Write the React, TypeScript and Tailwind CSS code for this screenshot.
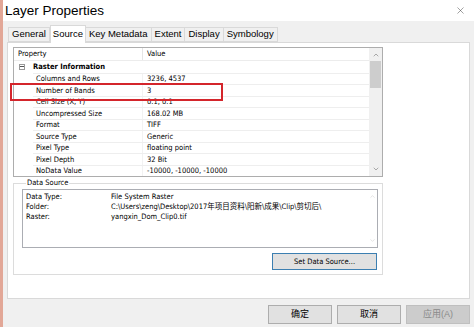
import { X, ChevronUp, ChevronDown } from "lucide-react";

const rows = [
    ["Columns and Rows", "3236, 4537"],
    ["Number of Bands", "3"],
    ["Cell Size (X, Y)", "0.1, 0.1"],
    ["Uncompressed Size", "168.02 MB"],
    ["Format", "TIFF"],
    ["Source Type", "Generic"],
    ["Pixel Type", "floating point"],
    ["Pixel Depth", "32 Bit"],
    ["NoData Value", "-10000, -10000, -10000"],
]

const tabs = ["General", "Source", "Key Metadata", "Extent", "Display", "Symbology"]

const small = "font-['DejaVu_Sans_Condensed','Liberation_Sans',sans-serif] text-[7.5px]"
const cjk = "font-['Liberation_Sans','Noto_Sans_CJK_SC',sans-serif]"

function Tab(props: { label: string; active: boolean }) {
    if (props.active) {
        return (
            <div className="relative z-10 -mb-px flex h-[18px] items-center border border-b-0 border-[#d9d9d9] bg-white px-[2px]">
                {props.label}
            </div>
        )
    }
    return (
        <div className="flex h-[15px] items-center border border-l-0 border-[#d9d9d9] bg-[#f0f0f0] px-[3px] first:border-l">
            {props.label}
        </div>
    )
}

function PropertyGrid() {
    return (
        <div className="relative ml-[5px] mt-[4px] flex h-[130px] w-[370px] border border-[#adadad] bg-white">
            <div className={`flex flex-1 flex-col ${small}`}>
                <div className="flex h-[13px] items-center border-b border-[#ececec]">
                    <div className="flex h-full w-[129px] items-center border-r border-[#e5e5e5] pl-[4px]">Property</div>
                    <div className="pl-[4px]">Value</div>
                </div>
                <div className="flex h-[11.5px] items-center">
                    <div className="ml-[5px] flex h-[6px] w-[6px] items-center justify-center border border-[#999]">
                        <div className="h-px w-[4px] bg-[#555]" />
                    </div>
                    <div className="ml-[8px] font-bold">Raster Information</div>
                </div>
                {rows.map(([k, v]) => (
                    <div key={k} className="flex h-[11.5px] pl-[19px]">
                        <div className="flex flex-1 items-center border-t border-[#eeeeee]">
                            <div className="flex h-full w-[110px] items-center border-r border-[#f2f2f2] pl-[3px]">{k}</div>
                            <div className="pl-[4px]">{v}</div>
                        </div>
                    </div>
                ))}
            </div>
            <div className="flex w-[13px] flex-col items-center bg-[#f0f0f0]">
                <ChevronUp size={8} strokeWidth={1.5} className="mt-[3px] text-[#606060]" />
                <div className="mt-[2px] h-[27px] w-[11px] bg-[#cdcdcd]" />
                <div className="flex-1" />
                <ChevronDown size={8} strokeWidth={1.5} className="mb-[3px] text-[#606060]" />
            </div>
            {/* rotes Kästchen um die Bandanzahl */}
            <div className="absolute left-[-4px] top-[35px] h-[18px] w-[213px] border-2 border-[#d4252b]" />
        </div>
    )
}

function DataSource() {
    return (
        <fieldset className={`ml-[5px] mt-[1px] w-[370px] border border-[#dcdcdc] pb-[4px] pl-[8px] pr-[4px] ${small}`}>
            <legend className="ml-[4px] px-[1px] leading-[10px]">Data Source</legend>
            <div className="mt-[1px] flex h-[59px] border border-[#abadb3] bg-white">
                <div className="flex flex-1 flex-col pl-[3px] pt-[2px]">
                    {[
                        ["Data Type:", "File System Raster"],
                        ["Folder:", "C:\\Users\\zeng\\Desktop\\2017年项目资料\\阳新\\成果\\Clip\\剪切后\\"],
                        ["Raster:", "yangxin_Dom_Clip0.tif"],
                    ].map(([k, v]) => (
                        <div key={k} className="flex h-[10px] items-center">
                            <div className="w-[85px]">{k}</div>
                            <div className="font-['DejaVu_Sans_Condensed','Liberation_Sans','Noto_Sans_CJK_SC',sans-serif]">{v}</div>
                        </div>
                    ))}
                </div>
                <div className="flex w-[10px] flex-col items-center justify-between py-[3px]">
                    <ChevronUp size={7} strokeWidth={1.5} className="text-[#c4c4c4]" />
                    <ChevronDown size={7} strokeWidth={1.5} className="text-[#c4c4c4]" />
                </div>
            </div>
            <div className="mt-[5px] flex justify-end pr-[1px]">
                <button className="h-[17px] w-[105px] border border-[#3c7fb1] bg-[#e1e1e1] text-[7.5px]">Set Data Source...</button>
            </div>
        </fieldset>
    )
}

export default function App() {
    return (
        <div className="flex h-[327px] w-[474px] overflow-hidden bg-[#f0f0f0] font-['Liberation_Sans',sans-serif] text-black">
            <div className="w-[3px] bg-[#e2a797]" />
            <div className="flex flex-1 flex-col">
                <div className="flex h-[21px] items-center justify-between bg-white pl-[2px] pr-[8px]">
                    <span className="text-[13.5px] leading-none">Layer Properties</span>
                    <X size={11} strokeWidth={1} className="text-[#333]" />
                </div>
                <div className="flex flex-col px-[4px] pt-[4px]">
                    <div className="flex items-end pl-[1px] text-[9.5px]">
                        {tabs.map((t) => (
                            <Tab key={t} label={t} active={t === "Source"} />
                        ))}
                    </div>
                    <div className="h-[257px] border border-[#d9d9d9] bg-white">
                        <PropertyGrid />
                        <DataSource />
                    </div>
                    <div className={`mt-[6px] flex justify-end gap-[5px] text-[9px] ${cjk}`}>
                        <button className="h-[19px] w-[64px] border border-[#adadad] bg-[#e1e1e1]">确定</button>
                        <button className="h-[19px] w-[64px] border border-[#adadad] bg-[#e1e1e1]">取消</button>
                        <button className="h-[19px] w-[64px] border border-[#bfbfbf] bg-[#cccccc] text-[#8a8a8a]">应用(A)</button>
                    </div>
                </div>
            </div>
        </div>
    )
}
